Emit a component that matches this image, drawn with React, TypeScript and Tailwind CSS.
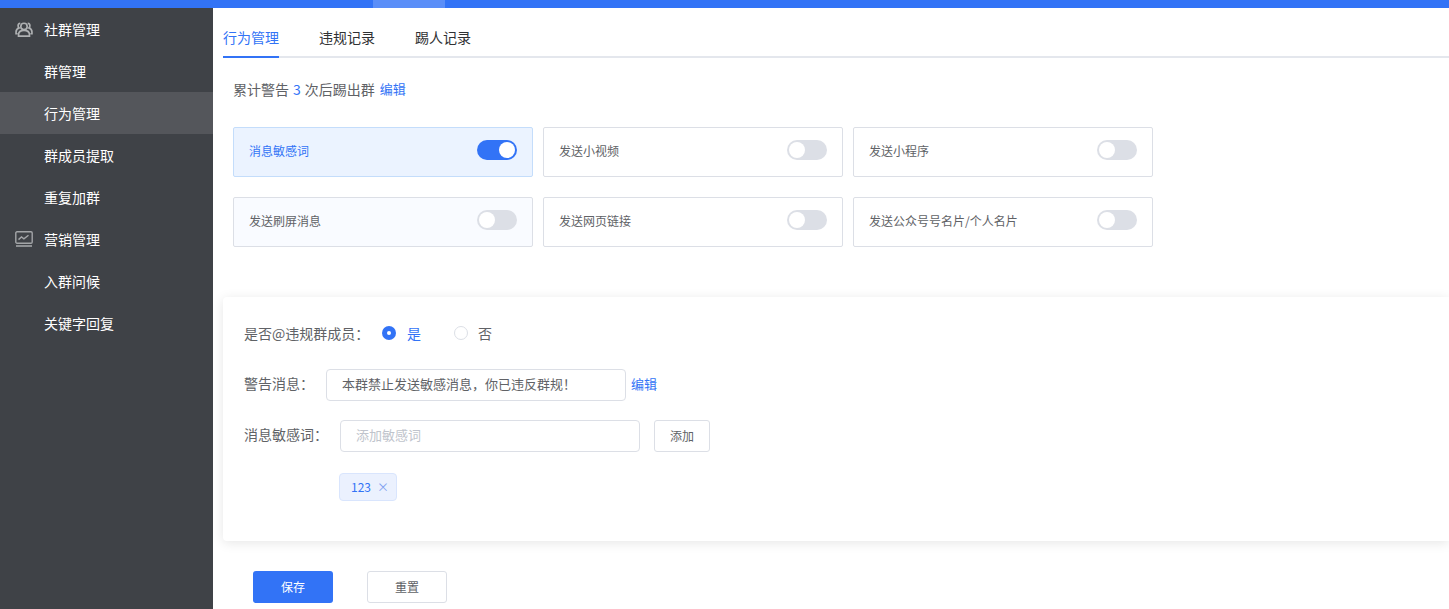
const font = "[font-family:'Noto_Sans_CJK_SC','Noto_Sans',sans-serif]";

const menu = [
  { label: "社群管理", icon: "users" },
  { label: "群管理" },
  { label: "行为管理", active: true },
  { label: "群成员提取" },
  { label: "重复加群" },
  { label: "营销管理", icon: "chart" },
  { label: "入群问候" },
  { label: "关键字回复" },
];

const rules = [
  { label: "消息敏感词", on: true },
  { label: "发送小视频" },
  { label: "发送小程序" },
  { label: "发送刷屏消息", hover: true },
  { label: "发送网页链接" },
  { label: "发送公众号号名片/个人名片" },
];

function UsersIcon() {
  return (
    <svg width="18" height="15" viewBox="0 0 20 17" fill="none" stroke="#aeb0b2" strokeWidth="1.9">
      <circle cx="10" cy="5" r="3.6" />
      <path d="M3.8 16v-1.6c0-3 2.5-5 6.2-5s6.2 2 6.2 5V16z" />
      <path d="M5.8 1.4a2.9 2.9 0 0 0-2.5 2.9c0 1 .4 1.8 1.1 2.4C2.2 7.5 1 9.2 1 11.4v1.9h1.8" />
      <path d="M14.2 1.4a2.9 2.9 0 0 1 2.5 2.9c0 1-.4 1.8-1.1 2.4 2.2.8 3.4 2.5 3.4 4.7v1.9h-1.8" />
    </svg>
  );
}

function ChartIcon() {
  return (
    <svg width="18" height="16" viewBox="0 0 18 16" fill="none" stroke="#a3a5a8" strokeWidth="1.4">
      <rect x="0.8" y="0.8" width="16.4" height="11.4" rx="1.2" />
      <path d="M3.5 8.6l3-2.6 2.4 1.8 4.6-3.6" />
      <path d="M1 15h16" strokeWidth="1.6" />
    </svg>
  );
}

function Toggle({ on }: { on?: boolean }) {
  return (
    <span className={`mb-[2px] flex h-5 w-10 rounded-full p-0.5 ${on ? "justify-end bg-[#3273f6]" : "bg-[#dcdfe6]"}`}>
      <span className="h-4 w-4 rounded-full bg-white" />
    </span>
  );
}

export default function App() {
  return (
    <div className={`flex h-[609px] w-[1449px] flex-col overflow-hidden bg-white text-[#606266] ${font}`}>
      <div className="flex h-2 shrink-0 bg-[#3273f6] pl-[373px]">
        <div className="w-[72px] bg-[#5a8ef8]" />
      </div>
      <div className="flex min-h-0 flex-1">
        <aside className="w-[213px] shrink-0 bg-[#3f4247]">
          {menu.map((item) => (
            <div
              key={item.label}
              className={`relative flex h-[42px] items-center pl-11 text-[14px] text-white ${item.active ? "bg-[#54565b]" : ""}`}
            >
              {item.icon === "users" && (
                <span className="absolute left-[15px] top-[14px]">
                  <UsersIcon />
                </span>
              )}
              {item.icon === "chart" && (
                <span className="absolute left-[15px] top-[13px]">
                  <ChartIcon />
                </span>
              )}
              {item.label}
            </div>
          ))}
        </aside>
        <main className="min-w-0 flex-1 pl-[10px]">
          <div className="flex h-[50px] gap-10 border-b-2 border-[#e4e7ed] text-[14px]">
            <div className="-mb-0.5 flex h-[50px] items-center border-b-2 border-[#3273f6] pt-[10px] text-[#3273f6]">行为管理</div>
            <div className="flex h-[48px] items-center pt-[10px] text-[#303133]">违规记录</div>
            <div className="flex h-[48px] items-center pt-[10px] text-[#303133]">踢人记录</div>
          </div>
          <div className="ml-[10px] mt-[21px] flex h-5 items-center text-[14px]">
            累计警告<span className="mx-1 text-[#3273f6]">3</span>次后踢出群
            <span className="ml-[5px] text-[13px] text-[#3273f6]">编辑</span>
          </div>
          <div className="ml-[10px] mt-[28px] grid w-[920px] grid-cols-[300px_300px_300px] gap-x-[10px] gap-y-5">
            {rules.map((rule) => (
              <div
                key={rule.label}
                className={`flex h-[50px] items-center justify-between rounded-[2px] border pb-[2px] pl-[15px] pr-[15px] text-[12px] ${
                  rule.on
                    ? "border-[#c4ddfb] bg-[#ebf3ff] text-[#3273f6]"
                    : rule.hover
                      ? "border-[#dcdfe6] bg-[#f9fbff]"
                      : "border-[#dcdfe6] bg-white"
                }`}
              >
                {rule.label}
                <Toggle on={rule.on} />
              </div>
            ))}
          </div>
          <section className="mt-[50px] h-[244px] rounded-l-[4px] bg-white pl-[21px] pt-[26px] text-[13px] shadow-[0_2px_12px_rgba(0,0,0,0.1)]">
            <div className="flex h-5 items-center text-[14px]">
              <span className="w-[138px]">是否@违规群成员：</span>
              <span className="flex h-[14px] w-[14px] items-center justify-center rounded-full bg-[#3273f6]">
                <span className="h-1 w-1 rounded-full bg-white" />
              </span>
              <span className="ml-[11px] text-[#3273f6]">是</span>
              <span className="ml-[33px] h-[14px] w-[14px] rounded-full border border-[#dcdfe6]" />
              <span className="ml-[10px]">否</span>
            </div>
            <div className="mt-[26px] flex h-8 items-center">
              <span className="w-[82px] pb-[3px] text-[14px]">警告消息：</span>
              <div className="flex h-8 w-[300px] items-center rounded-[4px] border border-[#dcdfe6] pb-[2px] pl-[15px]">
                本群禁止发送敏感消息，你已违反群规！
              </div>
              <span className="ml-[5px] pb-[2px] text-[#3273f6]">编辑</span>
            </div>
            <div className="mt-[19px] flex h-8 items-center">
              <span className="w-[96px] pb-[3px] text-[14px]">消息敏感词：</span>
              <div className="flex h-8 w-[300px] items-center rounded-[4px] border border-[#dcdfe6] pb-[2px] pl-[15px] text-[#c0c4cc]">
                添加敏感词
              </div>
              <div className="ml-[14px] flex h-8 w-14 items-center justify-center rounded-[3px] border border-[#dcdfe6] text-[12px]">
                添加
              </div>
            </div>
            <div className="ml-[95px] mt-[21px] flex h-7 w-[58px] items-center gap-[6px] rounded-[4px] border border-[#d9e5fd] bg-[#ebf1fe] pl-[11px] text-[12px] text-[#3273f6]">
              123
              <span className="text-[12px] leading-none text-[#7f9ff0]">×</span>
            </div>
          </section>
          <div className="ml-[30px] mt-[30px] flex gap-[34px] text-[12px]">
            <div className="flex h-8 w-20 items-center justify-center rounded-[3px] bg-[#3273f6] text-white">保存</div>
            <div className="flex h-8 w-20 items-center justify-center rounded-[3px] border border-[#dcdfe6]">重置</div>
          </div>
        </main>
      </div>
    </div>
  );
}
